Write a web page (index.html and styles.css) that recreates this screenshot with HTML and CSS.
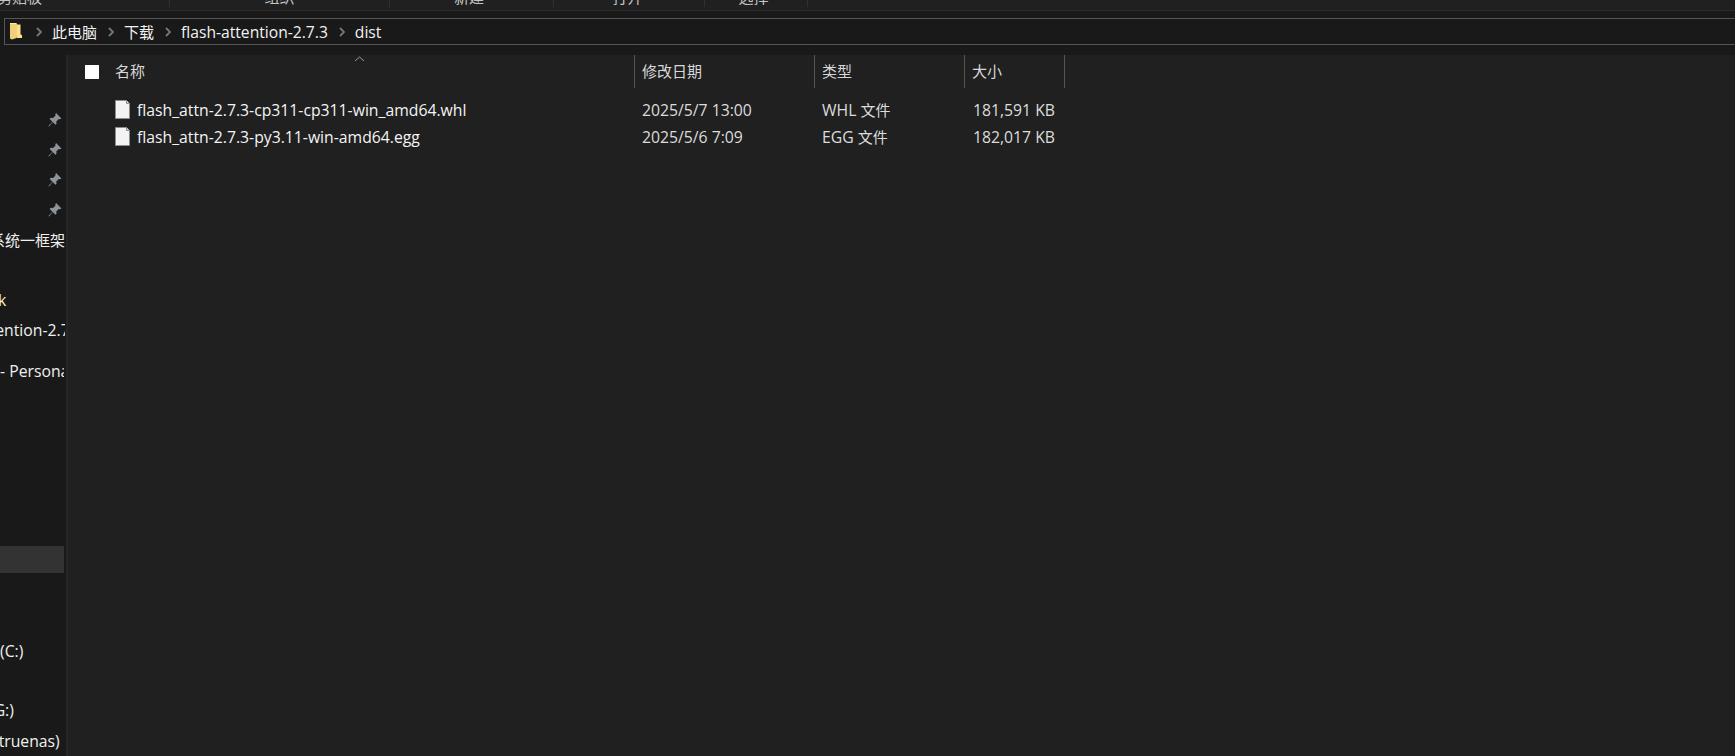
FILE: index.html
```html
<!DOCTYPE html>
<html lang="zh-CN">
<head>
<meta charset="utf-8">
<title>dist</title>
<link rel="stylesheet" href="styles.css">
</head>
<body>
<div class="ribbon">
  <div class="group g1"><span class="glabel">剪贴板</span></div>
  <div class="group g2"><span class="glabel">组织</span></div>
  <div class="group g3"><span class="glabel">新建</span></div>
  <div class="group g4"><span class="glabel">打开</span></div>
  <div class="group g5"><span class="glabel">选择</span></div>
</div>
<div class="addressband">
  <div class="address">
    <svg class="folder" width="12" height="17" viewBox="0 0 12 17"><path d="M0 0h6.500l.5 1v10.500l-.5 3.500L2 16.500 0 15.500z" fill="#f0cf78"/><path d="M7 1.500h3.500v10l1.500.5v3H6.500z" fill="#ffe08a"/><path d="M0 0h6v1H0z" fill="#ffe9a8"/></svg>
    <svg class="chev first" width="6" height="10" viewBox="0 0 6 10"><path d="M1 1l4 4-4 4" fill="none" stroke="#777" stroke-width="1.800"/></svg>
    <span class="crumb cjk">此电脑</span>
    <svg class="chev" width="6" height="10" viewBox="0 0 6 10"><path d="M1 1l4 4-4 4" fill="none" stroke="#777" stroke-width="1.800"/></svg>
    <span class="crumb cjk">下载</span>
    <svg class="chev" width="6" height="10" viewBox="0 0 6 10"><path d="M1 1l4 4-4 4" fill="none" stroke="#777" stroke-width="1.800"/></svg>
    <span class="crumb">flash-attention-2.7.3</span>
    <svg class="chev" width="6" height="10" viewBox="0 0 6 10"><path d="M1 1l4 4-4 4" fill="none" stroke="#777" stroke-width="1.800"/></svg>
    <span class="crumb">dist</span>
  </div>
</div>
<div class="main">
  <aside class="nav">
    <div class="pins">
      <svg class="pin" width="14" height="14" viewBox="0 0 13 13"><path d="M7.500 0l5 5-1.500.8-1-.3-2.300 2.300.2 2.200-1 1-2.600-2.700L1 12.500l-.6-.5 3.700-3.900L1.500 5.500l1-1 2.200.2L7 2.400l-.3-1z" fill="#8d9499"/></svg>
      <svg class="pin" width="14" height="14" viewBox="0 0 13 13"><path d="M7.500 0l5 5-1.500.8-1-.3-2.300 2.300.2 2.200-1 1-2.600-2.700L1 12.500l-.6-.5 3.700-3.900L1.500 5.500l1-1 2.200.2L7 2.400l-.3-1z" fill="#8d9499"/></svg>
      <svg class="pin" width="14" height="14" viewBox="0 0 13 13"><path d="M7.500 0l5 5-1.500.8-1-.3-2.300 2.300.2 2.200-1 1-2.600-2.700L1 12.500l-.6-.5 3.700-3.900L1.500 5.500l1-1 2.200.2L7 2.400l-.3-1z" fill="#8d9499"/></svg>
      <svg class="pin" width="14" height="14" viewBox="0 0 13 13"><path d="M7.500 0l5 5-1.500.8-1-.3-2.300 2.300.2 2.200-1 1-2.600-2.700L1 12.500l-.6-.5 3.700-3.900L1.500 5.500l1-1 2.200.2L7 2.400l-.3-1z" fill="#8d9499"/></svg>
    </div>
    <div class="navtext t1 cjk">系统一框架</div>
    <div class="navtext t2">k</div>
    <div class="navtext t3">flash-attention-2.7.3</div>
    <div class="navtext t4">- Personal</div>
    <div class="selected"></div>
    <div class="navtext t5">(C:)</div>
    <div class="navtext t6">(G:)</div>
    <div class="navtext t7">(truenas)</div>
  </aside>
  <div class="splitter"></div>
  <section class="list">
    <svg class="sortcaret" width="11" height="6" viewBox="0 0 11 6"><path d="M1 5l4.500-4L10 5" fill="none" stroke="#9a9a9a"/></svg>
    <div class="header">
      <div class="col cname"><span class="check"></span><span class="coltext">名称</span></div>
      <div class="col cdate"><span class="coltext">修改日期</span></div>
      <div class="col ctype"><span class="coltext">类型</span></div>
      <div class="col csize"><span class="coltext">大小</span></div>
    </div>
    <div class="rows">
      <div class="row">
        <div class="cell cname"><svg class="file" width="15" height="19" viewBox="0 0 15 19"><path d="M.5.500h11l3 3v15H.5z" fill="#f3f3f3" stroke="#8e8e8e"/><path d="M11.500.500v3h3" fill="#d8d8d8" stroke="#8e8e8e"/></svg><span>flash_attn-2.7.3-cp311-cp311-win_amd64.whl</span></div>
        <div class="cell cdate">2025/5/7 13:00</div>
        <div class="cell ctype">WHL <span class="cjk">文件</span></div>
        <div class="cell csize">181,591 KB</div>
      </div>
      <div class="row">
        <div class="cell cname"><svg class="file" width="15" height="19" viewBox="0 0 15 19"><path d="M.5.500h11l3 3v15H.5z" fill="#f3f3f3" stroke="#8e8e8e"/><path d="M11.500.500v3h3" fill="#d8d8d8" stroke="#8e8e8e"/></svg><span>flash_attn-2.7.3-py3.11-win-amd64.egg</span></div>
        <div class="cell cdate">2025/5/6 7:09</div>
        <div class="cell ctype">EGG <span class="cjk">文件</span></div>
        <div class="cell csize">182,017 KB</div>
      </div>
    </div>
  </section>
</div>
</body>
</html>
```
FILE: styles.css
```css
* { box-sizing: border-box; }
html, body { margin: 0; height: 100%; }
body {
  width: 1735px;
  height: 756px;
  overflow: hidden;
  background: #202020;
  color: #fff;
  font-family: "Open Sans", "Noto Sans CJK SC", sans-serif;
  font-size: 15.75px;
  display: flex;
  flex-direction: column;
}
.cjk { font-size: 15px; }
.ribbon {
  height: 11px;
  flex: none;
  display: flex;
  background: #202020;
  border-bottom: 1px solid #2b2b2b;
  overflow: hidden;
}
.group {
  height: 7px;
  border-right: 1px solid #303030;
  display: flex;
  justify-content: center;
  align-items: flex-end;
  overflow: hidden;
  flex: none;
}
.g1 { width: 170px; justify-content: flex-start; }
.g2 { width: 220px; }
.g3 { width: 164px; padding-right: 5px; }
.g4 { width: 151px; padding-right: 3px; }
.g5 { width: 103px; padding-right: 5px; }
.g1 .glabel { margin-left: -3px; }
.glabel { color: #c4c4c4; font-size: 15px; line-height: 20px; flex: none; }
.addressband {
  flex: none;
  height: 44px;
  padding: 7px 0 10px 4px;
  background: #191919;
}
.address {
  height: 27px;
  display: flex;
  align-items: center;
  border: 1px solid #555;
  border-right: 0;
  background: #191919;
  padding-left: 5px;
}
.folder { flex: none; }
.chev { flex: none; margin: 0 10px 0 11px; }
.chev.first { margin-left: 14px; }
.crumb { font-size: 15.65px; color: #f2f2f2; white-space: nowrap; }
.crumb.cjk { font-size: 15px; }
.main { flex: 1; display: flex; min-height: 0; }
.nav {
  width: 66px;
  flex: none;
  background: #191919;
  position: relative;
  overflow: hidden;
}
.pins {
  display: flex;
  flex-direction: column;
  gap: 16px;
  align-items: flex-end;
  padding: 58px 4px 0 0;
  position: absolute;
  right: 0;
  top: 0;
}
.pin { display: block; flex: none; }
.navtext {
  position: absolute;
  line-height: 20px;
  white-space: nowrap;
  color: #f0f0f0;
}
.t1 { top: 175px; right: 1px; }
.t2 { top: 235px; left: -2px; color: #f7ecd6; }
.t3 { top: 265px; left: -65px; width: 130px; overflow: hidden; }
.t4 { top: 306px; left: 0; width: 64px; overflow: hidden; }
.t5 { top: 586px; left: 0; }
.t6 { top: 645px; left: -11px; }
.t7 { top: 676px; left: -6px; }
.selected { position: absolute; top: 491px; left: 0; width: 64px; height: 27px; background: #333; }
.splitter { width: 2px; flex: none; background: #262626; }
.list { flex: 1; position: relative; background: #202020; min-width: 0; }
.sortcaret { position: absolute; left: 286px; top: 1px; }
.header { display: flex; height: 33px; color: #d8d8d8; font-size: 15px; }
.col { display: flex; align-items: center; height: 33px; border-right: 1px solid #555; }
.coltext { margin-top: -2px; }
.col.cname { padding-left: 17px; }
.check { width: 14px; height: 14px; background: #fff; margin-right: 16px; flex: none; }
.cname { width: 567px; flex: none; }
.cdate { width: 180px; flex: none; }
.ctype { width: 150px; flex: none; }
.csize { width: 100px; flex: none; }
.col.cdate, .col.ctype, .col.csize { padding-left: 7px; }
.rows { padding-top: 8px; }
.row { display: flex; height: 27px; align-items: center; color: #ececec; }
.cell { white-space: nowrap; }
.cell.cname { display: flex; align-items: center; padding-left: 47px; color: #f4f4f4; }
.file { flex: none; margin-right: 7px; }
.cell.cdate { padding-left: 7px; color: #dcdcdc; }
.cell.ctype { padding-left: 7px; color: #dcdcdc; }
.cell.csize { text-align: right; padding-right: 10px; color: #dcdcdc; }
```
